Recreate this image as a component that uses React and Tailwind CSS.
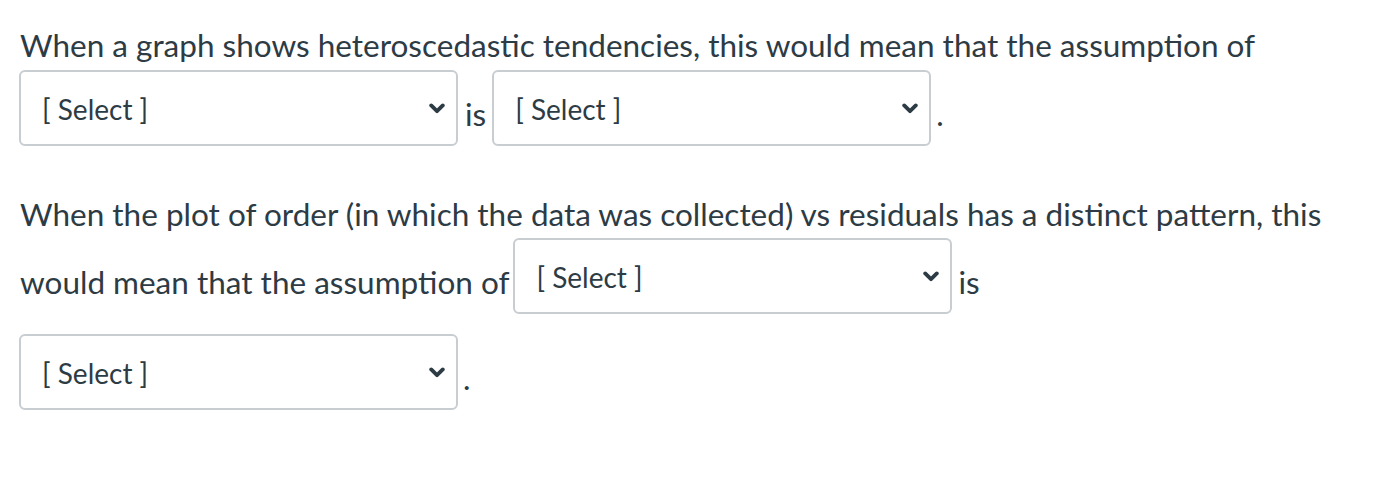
import React from 'react';

function Chevron() {
  return (
    <svg width="16" height="11" viewBox="0 0 16 11" className="shrink-0">
      <path d="M2.2 2.4 L8 8.2 L13.8 2.4" fill="none" stroke="#2d3b45" strokeWidth="3.8" strokeLinecap="round" strokeLinejoin="round" />
    </svg>
  );
}

function SelectBox() {
  return (
    <div className="flex h-[76px] w-[439px] shrink-0 items-center justify-between rounded-[6px] border-2 border-[#c7cdd1] bg-white pl-[21px] pr-[11px]">
      <span className="mt-[1px] text-[28px] leading-[40px]">[ Select ]</span>
      <Chevron />
    </div>
  );
}

export default function App() {
  return (
    <div className="min-h-[494px] w-[1390px] bg-white pl-[19px] pt-[25px] font-['Lato','Liberation_Sans',sans-serif] text-[31.5px] leading-[40px] text-[#2d3b45]">
      {/* first question */}
      <p className="pl-[1px]">When a graph shows heteroscedastic tendencies, this would mean that the assumption of</p>
      <div className="mt-[5px] flex items-start">
        <SelectBox />
        <span className="ml-[7px] mr-[6px] mt-[24px]">is</span>
        <SelectBox />
        <span className="ml-[5px] mt-[24px]">.</span>
      </div>

      {/* second question */}
      <p className="mt-[48px] pl-[1px]">When the plot of order (in which the data was collected) vs residuals has a distinct pattern, this</p>
      <div className="mt-[4px] flex items-start">
        <span className="mr-[4px] mt-[24px] pl-[1px]">would mean that the assumption of</span>
        <SelectBox />
        <span className="ml-[6px] mt-[24px]">is</span>
      </div>
      <div className="mt-[20px] flex items-start">
        <SelectBox />
        <span className="ml-[5px] mt-[24px]">.</span>
      </div>
    </div>
  );
}
